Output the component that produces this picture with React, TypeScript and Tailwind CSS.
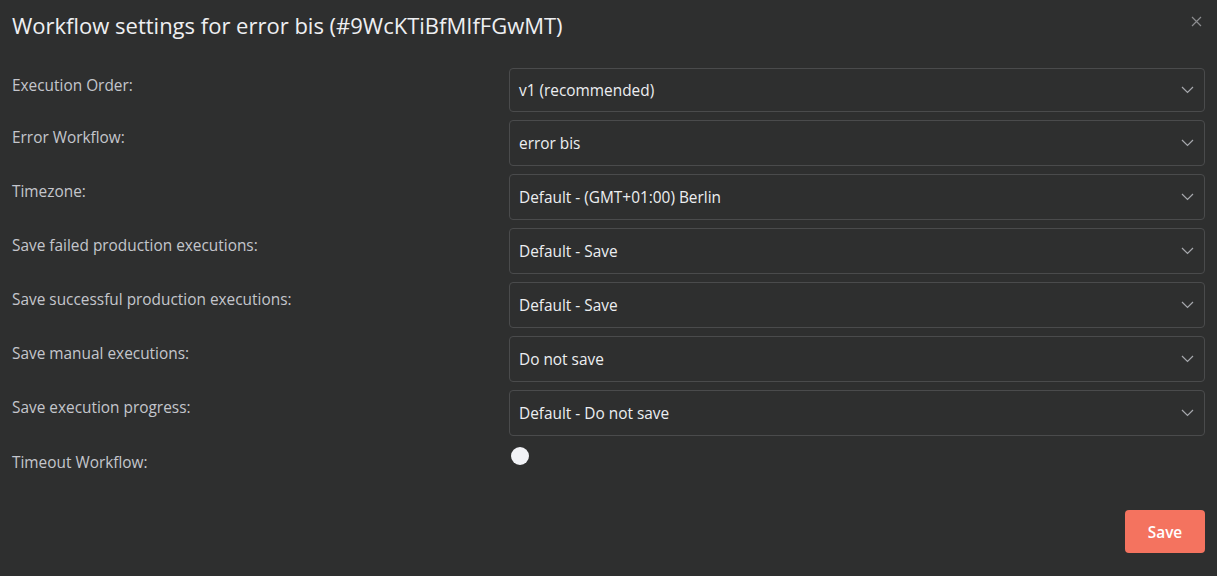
import React from 'react';

interface SettingRow {
  label: string;
  value: string;
  compact?: boolean;
}

const rows: SettingRow[] = [
  { label: 'Execution Order:', value: 'v1 (recommended)', compact: true },
  { label: 'Error Workflow:', value: 'error bis' },
  { label: 'Timezone:', value: 'Default - (GMT+01:00) Berlin' },
  { label: 'Save failed production executions:', value: 'Default - Save' },
  { label: 'Save successful production executions:', value: 'Default - Save' },
  { label: 'Save manual executions:', value: 'Do not save' },
  { label: 'Save execution progress:', value: 'Default - Do not save' },
];

const Chevron = () => (
  <svg width="13" height="8" viewBox="0 0 13 8" fill="none" stroke="#a6a8ad" strokeWidth="1.2">
    <path d="M1 1l5.5 5.5L12 1" />
  </svg>
);

export default function App() {
  return (
    <div
      className="w-[1217px] h-[576px] bg-[#2e2f2f] px-[12px] pt-[10px] overflow-hidden"
      style={{ fontFamily: '"Open Sans", sans-serif' }}
    >
      <div className="flex items-start justify-between">
        <h1 className="text-[22px] leading-[30px] text-[#eeeff2]">
          Workflow settings for error bis (#9WcKTiBfMIfFGwMT)
        </h1>
        <button className="mt-[6px] mr-[3px] text-[#8b8c8f]" title="Close">
          <svg width="11" height="11" viewBox="0 0 11 11" stroke="currentColor" strokeWidth="1.2">
            <path d="M1 1l9 9M10 1l-9 9" />
          </svg>
        </button>
      </div>

      <div className="mt-[28px] flex flex-col gap-[8px]">
        {rows.map((row) => (
          <div key={row.label} className="grid grid-cols-[497px_1fr]">
            <div className="pt-[7px] text-[15.4px] leading-[22px] text-[#c4c6cc]">{row.label}</div>
            <div
              className={`flex items-center justify-between rounded-[4px] border border-[#4a4b4c] pl-[9px] pr-[10px] text-[15.4px] text-[#eceef1] ${
                row.compact ? 'h-[44px]' : 'h-[46px]'
              }`}
            >
              <span className="pt-[2px]">{row.value}</span>
              <Chevron />
            </div>
          </div>
        ))}
        <div className="grid grid-cols-[497px_1fr]">
          <div className="pt-[8px] text-[15.4px] leading-[22px] text-[#c4c6cc]">Timeout Workflow:</div>
          <div className="pt-[3px] pl-[2px]">
            <div className="h-[18px] w-[18px] rounded-full bg-[#f1f2f6]" />
          </div>
        </div>
      </div>

      <div className="mt-[36px] flex justify-end">
        <button className="h-[43px] w-[80px] rounded-[4px] bg-[#f4735f] pt-[2px] text-[15.4px] font-semibold text-white">
          Save
        </button>
      </div>
    </div>
  );
}
